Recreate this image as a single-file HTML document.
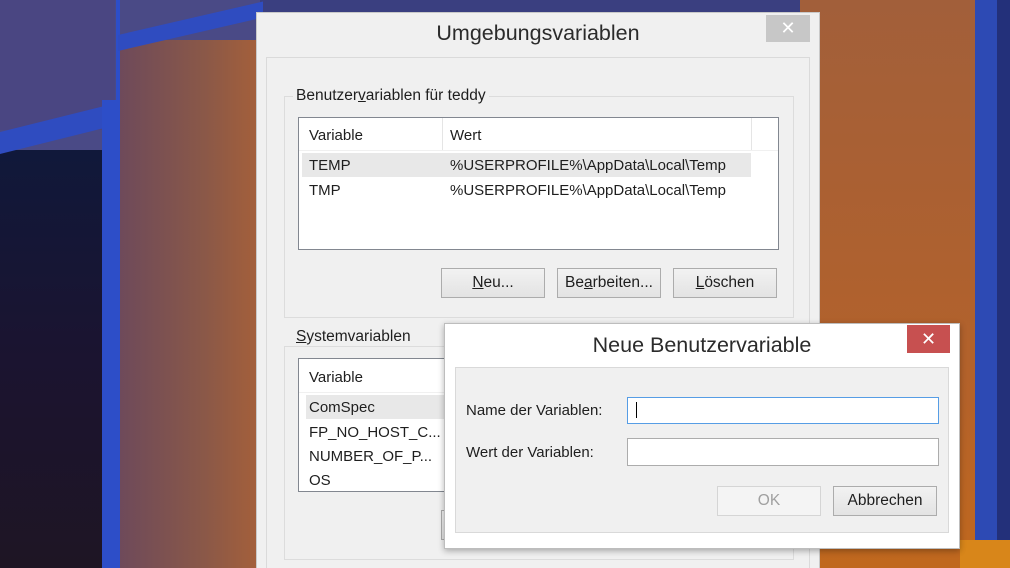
<!DOCTYPE html>
<html><head><meta charset="utf-8"><style>
*{margin:0;padding:0;box-sizing:border-box}
html,body{width:1010px;height:568px;overflow:hidden}
body{position:relative;font-family:"Liberation Sans",sans-serif;font-size:15px;color:#1e1e1e;background:#3a3f80}
.a{position:absolute;white-space:nowrap}
.btn{position:absolute;height:30px;border:1px solid #acacac;background:linear-gradient(#f2f2f2,#e3e3e3);text-align:center;line-height:28px;font-size:15.5px}
.grp{position:absolute;border:1px solid #dcdcdc}
.lbl{position:absolute;background:#f0f0f0;padding:0 3px;font-size:15.5px;white-space:nowrap}
</style></head><body>
<!-- background -->
<div class="a" style="left:0;top:0;width:260px;height:568px;background:#4a4a86"></div>
<div class="a" style="left:0;top:0;width:115px;height:130px;background:#4a4682"></div>
<div class="a" style="left:0;top:150px;width:102px;height:418px;background:linear-gradient(#10183a,#1b1430 50%,#1e1524)"></div>
<div class="a" style="left:0;top:132px;width:118px;height:22px;background:#2f4cc0;transform:skewY(-14deg);transform-origin:left"></div>
<div class="a" style="left:102px;top:100px;width:18px;height:468px;background:#2d4ec8"></div>
<div class="a" style="left:116px;top:0;width:4px;height:110px;background:#2d4ec8"></div>
<div class="a" style="left:120px;top:40px;width:140px;height:528px;background:linear-gradient(90deg,#6e4a5a,#8a5848 60%,#a5603a)"></div>
<div class="a" style="left:118px;top:35px;width:145px;height:16px;background:#2f4cc0;transform:skewY(-13deg);transform-origin:left"></div>
<div class="a" style="left:800px;top:0;width:175px;height:568px;background:linear-gradient(#a25f3a,#b4622a 70%,#c0681e)"></div>
<div class="a" style="left:975px;top:0;width:22px;height:568px;background:#2d4ab4"></div>
<div class="a" style="left:997px;top:0;width:13px;height:568px;background:#23307a"></div>
<div class="a" style="left:960px;top:540px;width:50px;height:28px;background:#d8861a"></div>

<!-- main dialog -->
<div class="a" style="left:256px;top:12px;width:564px;height:556px;background:#f0f0f0;border:1px solid #c9c9c9;border-bottom:none"></div>
<div class="a" style="left:256px;top:21px;width:564px;text-align:center;font-size:21.5px;color:#2b2b2b">Umgebungsvariablen</div>
<div class="a" style="left:766px;top:15px;width:44px;height:27px;background:#c7c7c7;color:#fff;text-align:center;line-height:27px;font-size:18px">✕</div>
<div class="a" style="left:266px;top:57px;width:544px;height:511px;border:1px solid #dadada;border-bottom:none;background:#f0f0f0"></div>
<div class="grp" style="left:284px;top:96px;width:510px;height:222px"></div>
<div class="lbl" style="left:293px;top:87px">Benutzer<u>v</u>ariablen für teddy</div>
<div class="a" style="left:298px;top:117px;width:481px;height:133px;background:#fff;border:1px solid #828790"></div>
<div class="a" style="left:442px;top:118px;width:1px;height:32px;background:#e5e5e5"></div>
<div class="a" style="left:751px;top:118px;width:1px;height:32px;background:#e5e5e5"></div>
<div class="a" style="left:299px;top:150px;width:479px;height:1px;background:#f0f0f0"></div>
<div class="a" style="left:309px;top:127px">Variable</div>
<div class="a" style="left:450px;top:127px">Wert</div>
<div class="a" style="left:302px;top:153px;width:449px;height:24px;background:#e8e8e8"></div>
<div class="a" style="left:309px;top:157px">TEMP</div>
<div class="a" style="left:450px;top:157px">%USERPROFILE%\AppData\Local\Temp</div>
<div class="a" style="left:309px;top:182px">TMP</div>
<div class="a" style="left:450px;top:182px">%USERPROFILE%\AppData\Local\Temp</div>
<div class="btn" style="left:441px;top:268px;width:104px"><u>N</u>eu...</div>
<div class="btn" style="left:557px;top:268px;width:104px">Be<u>a</u>rbeiten...</div>
<div class="btn" style="left:673px;top:268px;width:104px"><u>L</u>öschen</div>

<div class="grp" style="left:284px;top:346px;width:510px;height:214px"></div>
<div class="lbl" style="left:293px;top:328px"><u>S</u>ystemvariablen</div>
<div class="a" style="left:298px;top:358px;width:160px;height:134px;background:#fff;border:1px solid #828790"></div>
<div class="a" style="left:299px;top:392px;width:159px;height:1px;background:#f0f0f0"></div>
<div class="a" style="left:309px;top:369px">Variable</div>
<div class="a" style="left:306px;top:395px;width:152px;height:24px;background:#e8e8e8"></div>
<div class="a" style="left:309px;top:399px">ComSpec</div>
<div class="a" style="left:309px;top:424px">FP_NO_HOST_C...</div>
<div class="a" style="left:309px;top:448px">NUMBER_OF_P...</div>
<div class="a" style="left:309px;top:472px">OS</div>
<div class="btn" style="left:441px;top:510px;width:20px"></div>

<!-- second dialog -->
<div class="a" style="left:444px;top:323px;width:516px;height:226px;background:#fff;border:1px solid #bdbdbd;box-shadow:0 2px 6px rgba(0,0,0,.3)"></div>
<div class="a" style="left:444px;top:333px;width:516px;text-align:center;font-size:21.5px;color:#2b2b2b">Neue Benutzervariable</div>
<div class="a" style="left:907px;top:325px;width:43px;height:28px;background:#c75050;color:#fff;text-align:center;line-height:28px;font-size:18px">✕</div>
<div class="a" style="left:455px;top:367px;width:494px;height:166px;background:#f0f0f0;border:1px solid #d9d9d9"></div>
<div class="a" style="left:466px;top:402px">Name der Variablen:</div>
<div class="a" style="left:466px;top:444px">Wert der Variablen:</div>
<div class="a" style="left:627px;top:397px;width:312px;height:27px;background:#fff;border:1px solid #569de5"></div>
<div class="a" style="left:636px;top:402px;width:1px;height:16px;background:#000"></div>
<div class="a" style="left:627px;top:438px;width:312px;height:28px;background:#fff;border:1px solid #acacac"></div>
<div class="btn" style="left:717px;top:486px;width:104px;background:#f4f4f4;border-color:#d5d5d5;color:#a0a0a0">OK</div>
<div class="btn" style="left:833px;top:486px;width:104px">Abbrechen</div>
</body></html>
